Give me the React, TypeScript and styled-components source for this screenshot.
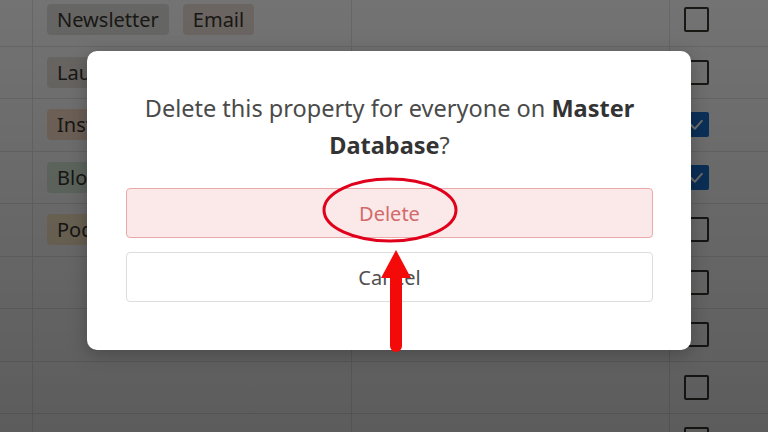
import React from 'react';
import styled, { createGlobalStyle } from 'styled-components';

const GlobalStyle = createGlobalStyle`
  html, body {
    margin: 0;
    padding: 0;
  }
  body {
    font-family: 'Noto Sans', 'Open Sans', sans-serif;
  }
`;

type TagColor = 'gray' | 'brown' | 'orange' | 'green' | 'yellow' | 'taupe';

const tagBg: Record<TagColor, string> = {
  gray: '#e3e2e0',
  brown: '#eee0da',
  taupe: '#e9e3dc',
  orange: '#fadec9',
  green: '#dbeddb',
  yellow: '#fdecc8',
};

interface RowData {
  tags: { label: string; color: TagColor }[];
  checked: boolean;
}

const rows: RowData[] = [
  {
    tags: [
      { label: 'Newsletter', color: 'gray' },
      { label: 'Email', color: 'brown' },
    ],
    checked: false,
  },
  { tags: [{ label: 'Launch', color: 'taupe' }], checked: false },
  { tags: [{ label: 'Instagram', color: 'orange' }], checked: true },
  { tags: [{ label: 'Blog', color: 'green' }], checked: true },
  { tags: [{ label: 'Podcast', color: 'yellow' }], checked: false },
  { tags: [], checked: false },
  { tags: [], checked: false },
  { tags: [], checked: false },
  { tags: [], checked: false },
];

const St = {
  Page: styled.div`
    position: relative;
    width: 768px;
    height: 432px;
    overflow: hidden;
    background: #ffffff;
  `,
  Table: styled.div`
    display: flex;
    flex-direction: column;
    margin-top: -6px;
  `,
  Row: styled.div`
    display: grid;
    grid-template-columns: 33px 319px 318px 98px;
    height: 52.5px;
    box-sizing: border-box;
    border-bottom: 1px solid #e4e4e2;
  `,
  Cell: styled.div`
    display: flex;
    align-items: center;
    border-right: 1px solid #e4e4e2;
    box-sizing: border-box;
  `,
  TagCell: styled.div`
    display: flex;
    align-items: center;
    gap: 14px;
    padding-left: 14px;
    border-right: 1px solid #e4e4e2;
    overflow: hidden;
    white-space: nowrap;
  `,
  Tag: styled.span<{ $color: TagColor }>`
    display: inline-flex;
    align-items: center;
    height: 31px;
    padding: 0 10px;
    border-radius: 4px;
    font-size: 20px;
    color: #37352f;
    background: ${(p) => tagBg[p.$color]};
  `,
  CheckCell: styled.div`
    display: flex;
    align-items: center;
    padding-left: 14px;
  `,
  Checkbox: styled.span<{ $checked: boolean }>`
    display: inline-flex;
    align-items: center;
    justify-content: center;
    width: 25px;
    height: 25px;
    box-sizing: border-box;
    border-radius: 2px;
    border: ${(p) => (p.$checked ? 'none' : '2.5px solid #37352f')};
    background: ${(p) => (p.$checked ? '#1a6fcc' : 'transparent')};
  `,
  Overlay: styled.div`
    position: absolute;
    inset: 0;
    display: flex;
    align-items: flex-start;
    padding: 51px 0 0 87px;
    background: linear-gradient(
      180deg,
      rgba(0, 0, 0, 0.55) 0%,
      rgba(0, 0, 0, 0.64) 100%
    );
  `,
  Modal: styled.div`
    position: relative;
    width: 604px;
    height: 299px;
    box-sizing: border-box;
    padding: 39px 38px 0 39px;
    background: #ffffff;
    border-radius: 10px;
    display: flex;
    flex-direction: column;
    box-shadow: 0 4px 18px rgba(0, 0, 0, 0.25);
  `,
  Message: styled.p`
    margin: 0;
    font-size: 23.5px;
    line-height: 37px;
    color: #4a4a4a;
    text-align: center;
    padding: 0 8px;
  `,
  Strong: styled.b`
    color: #333333;
    font-weight: 700;
  `,
  Actions: styled.div`
    display: flex;
    flex-direction: column;
    gap: 14px;
    margin-top: 24px;
  `,
  Button: styled.button<{ $danger?: boolean }>`
    height: 50px;
    width: 100%;
    border-radius: 4px;
    font-family: inherit;
    font-size: 20px;
    cursor: pointer;
    border: 1px solid ${(p) => (p.$danger ? '#eba9a9' : '#dddddd')};
    background: ${(p) => (p.$danger ? '#fbe9e9' : '#ffffff')};
    color: ${(p) => (p.$danger ? '#d26a6a' : '#505050')};
  `,
  Annotation: styled.svg`
    position: absolute;
    left: 0;
    top: 0;
    width: 768px;
    height: 432px;
    pointer-events: none;
  `,
};

const CheckMark: React.FC = () => (
  <svg width="17" height="17" viewBox="0 0 16 16">
    <path
      d="M3 8.5 L6.5 12 L13 4.5"
      fill="none"
      stroke="#ffffff"
      strokeWidth="1.8"
      strokeLinecap="round"
      strokeLinejoin="round"
    />
  </svg>
);

const App: React.FC = () => {
  return (
    <>
      <GlobalStyle />
      <St.Page>
        <St.Table>
          {rows.map((row, i) => (
            <St.Row key={i}>
              <St.Cell />
              <St.TagCell>
                {row.tags.map((t) => (
                  <St.Tag key={t.label} $color={t.color}>
                    {t.label}
                  </St.Tag>
                ))}
              </St.TagCell>
              <St.Cell />
              <St.CheckCell>
                <St.Checkbox $checked={row.checked}>
                  {row.checked && <CheckMark />}
                </St.Checkbox>
              </St.CheckCell>
            </St.Row>
          ))}
        </St.Table>

        <St.Overlay>
          <St.Modal>
            <St.Message>
              Delete this property for everyone on <St.Strong>Master</St.Strong>{' '}
              <St.Strong>Database</St.Strong>?
            </St.Message>
            <St.Actions>
              <St.Button $danger>Delete</St.Button>
              <St.Button>Cancel</St.Button>
            </St.Actions>
          </St.Modal>
        </St.Overlay>

        <St.Annotation viewBox="0 0 768 432">
          <ellipse
            cx="390"
            cy="210"
            rx="66"
            ry="31"
            fill="none"
            stroke="#e0001b"
            strokeWidth="3"
          />
          <rect x="390" y="272" width="12" height="80" rx="6" fill="#f50a0a" />
          <polygon points="396,250 381,278 411,278" fill="#f50a0a" />
        </St.Annotation>
      </St.Page>
    </>
  );
};

export default App;
